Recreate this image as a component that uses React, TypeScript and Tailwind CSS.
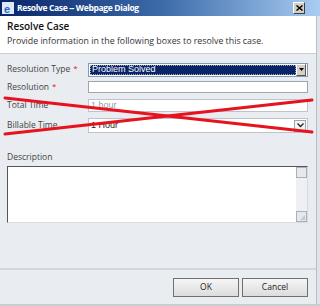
import React from "react";

function Row({ label, req, h, children }: { label: string; req?: boolean; h: string; children: React.ReactNode }) {
  return (
    <div className={`flex items-center ${h}`}>
      <div className="w-[81px] shrink-0 text-[8.5px] text-[#444] leading-none whitespace-nowrap">
        {label}
        {req && <span className="text-[#e02020] text-[8px] align-top ml-[3px] relative -top-[1px]">*</span>}
      </div>
      <div className="flex-1">{children}</div>
    </div>
  );
}

export default function App() {
  return (
    <div className="relative w-[320px] h-[306px] flex flex-col bg-[#e9ecf0] overflow-hidden" style={{ fontFamily: '"Open Sans", "Noto Sans", sans-serif' }}>
      {/* title bar */}
      <div className="h-[16px] flex items-center bg-gradient-to-r from-[#0a246a] via-[#3c6aa8] to-[#a9cdf2] pl-[2px] pr-[15px]">
        <svg width="12" height="12" viewBox="0 0 12 12" className="shrink-0">
          <rect x="0" y="0" width="12" height="12" fill="#dfe9f5" />
          <text x="2" y="10.5" fontSize="11" fontWeight="bold" fill="#1c67c9" fontFamily="Liberation Sans, sans-serif">e</text>
        </svg>
        <div className="ml-[3px] text-white font-bold leading-none whitespace-nowrap text-[8.5px] tracking-[-0.35px]">
          Resolve Case -- Webpage Dialog
        </div>
        <div className="ml-auto w-[12px] h-[12px] bg-[#d4d0c8] border border-t-white border-l-white border-r-[#404040] border-b-[#404040] flex items-center justify-center">
          <svg width="7" height="6" viewBox="0 0 7 6">
            <path d="M0.5 0.5 L6.5 5.5 M6.5 0.5 L0.5 5.5" stroke="#000" strokeWidth="1.5" />
          </svg>
        </div>
      </div>
      <div className="flex flex-1 min-h-0">
        <div className="flex-1 flex flex-col min-w-0">
          {/* header */}
          <div className="h-[38px] bg-white border-b border-[#c9ced6] pl-[7px] pt-[3px]">
            <div className="text-[10px] font-semibold text-[#111] leading-[14px]">Resolve Case</div>
            <div className="text-[8.8px] text-[#333] leading-[17px] whitespace-nowrap">Provide information in the following boxes to resolve this case.</div>
          </div>
          {/* form */}
          <div className="pl-[7px] pr-[8px] pt-[7px] flex flex-col">
            <Row label="Resolution Type" req h="h-[17px]">
              <div className="h-[14px] border border-[#7f9db9] bg-white flex items-center p-[1px]">
                <div className="flex-1 h-full bg-[#0a246a] border border-dotted border-[#9aa] text-white leading-none px-[1px] flex items-center overflow-hidden" style={{ fontFamily: '"Liberation Sans", sans-serif', fontSize: "9px" }}>
                  Problem Solved
                </div>
                <div className="w-[10px] h-[12px] bg-[#d4d0c8] border border-t-white border-l-white border-r-[#555] border-b-[#555] flex items-center justify-center">
                  <svg width="5" height="3" viewBox="0 0 5 3"><path d="M0 0 H5 L2.5 3 Z" fill="#000" /></svg>
                </div>
              </div>
            </Row>
            <Row label="Resolution" req h="h-[18px]">
              <div className="h-[12px] border border-[#a0a6ae] bg-white" />
            </Row>
            <Row label="Total Time" h="h-[19px]">
              <div className="h-[13px] border border-[#c0c4ca] bg-white text-[#9a9a9a] leading-none pl-[2px] flex items-center" style={{ fontFamily: '"Liberation Sans", sans-serif', fontSize: "9px" }}>1 hour</div>
            </Row>
            <Row label="Billable Time" h="h-[21px]">
              <div className="h-[15px] border border-[#c0c4ca] bg-white flex items-center">
                <div className="flex-1 text-[#222] pl-[2px] leading-none" style={{ fontFamily: '"Liberation Sans", sans-serif', fontSize: "9px" }}>1 Hour</div>
                <div className="w-[12px] h-[12px] mr-[1px] border border-[#9aa5b5] bg-[#f3f4f6] flex items-center justify-center">
                  <svg width="7" height="5" viewBox="0 0 7 5"><path d="M0.5 0.5 L3.5 3.5 L6.5 0.5" stroke="#222" strokeWidth="1.3" fill="none" /></svg>
                </div>
              </div>
            </Row>
            <div className="mt-[14px] text-[8.5px] text-[#444] leading-[14px]">Description</div>
            <div className="mt-[2px] h-[57px] bg-white border-t border-l border-t-[#555] border-l-[#555] border-r border-b border-r-[#d8dbe0] border-b-[#d8dbe0] flex justify-end">
              <div className="w-[11px] h-full bg-[#eef0f3] flex flex-col justify-between">
                <div className="w-[11px] h-[11px] border border-[#a9b0ba] bg-[#e6e8ec]" />
                <div className="w-[11px] h-[11px] border border-[#a9b0ba] bg-[#e6e8ec] flex items-end justify-end p-[1px]">
                  <svg width="5" height="5" viewBox="0 0 5 5"><path d="M5 0 V5 H0 Z" fill="#c5cad2" /></svg>
                </div>
              </div>
            </div>
          </div>
          <div className="flex-1" />
          {/* footer */}
          <div className="h-[36px] border-t-2 border-[#d3d7dd] flex justify-end items-start pt-[8px] pr-[8px] gap-[3px]">
            <div className="w-[66px] h-[19px] border border-[#707070] bg-gradient-to-b from-[#f6f6f6] to-[#dcdcdc] text-[8.5px] text-[#222] flex items-center justify-center">OK</div>
            <div className="w-[66px] h-[19px] border border-[#707070] bg-gradient-to-b from-[#f6f6f6] to-[#dcdcdc] text-[8.5px] text-[#222] flex items-center justify-center">Cancel</div>
          </div>
        </div>
        <div className="w-[4px] border-l border-[#b8bcc4] bg-[#e0e3e8]" />
      </div>
      <div className="h-[2px] bg-[#c8ccd2]" />
      {/* red X overlay */}
      <svg className="absolute left-0 top-0 pointer-events-none" width="320" height="306">
        <path d="M5 98 L312 132" stroke="#e8121f" strokeWidth="3" strokeLinecap="round" />
        <path d="M5 134 L312 100" stroke="#e8121f" strokeWidth="3" strokeLinecap="round" />
      </svg>
    </div>
  );
}
